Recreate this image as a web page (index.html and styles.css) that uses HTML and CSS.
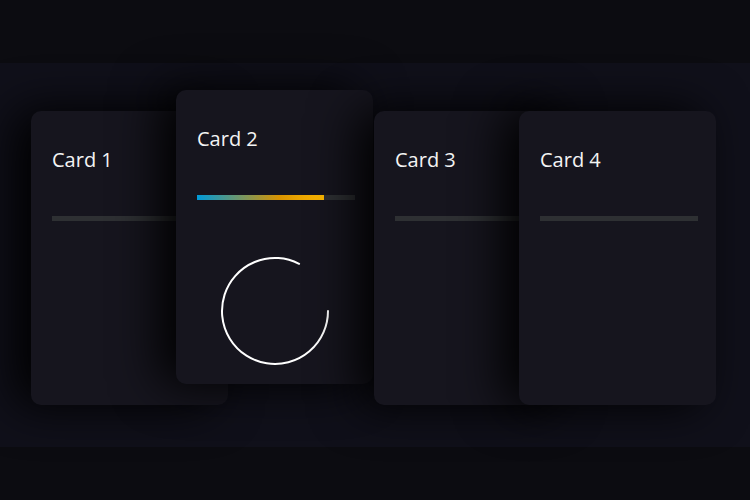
FILE: index.html
```html
<!DOCTYPE html>
<html lang="en">
<head>
<meta charset="utf-8">
<title>Cards</title>
<link rel="stylesheet" href="styles.css">
</head>
<body>
<section class="card-list">
  <article class="card">
    <h3 class="title">Card 1</h3>
    <div class="bar"><div class="filled" style="width:0"></div></div>
  </article>
  <article class="card card-raised">
    <h3 class="title">Card 2</h3>
    <div class="bar"><div class="filled" style="width:127px"></div></div>
    <svg class="circle" width="110" height="110" viewBox="0 0 110 110">
      <path d="M108 55 A53 53 0 1 1 79.1 7.8" fill="none" stroke="#ffffff" stroke-width="2" stroke-linecap="round"/>
    </svg>
  </article>
  <article class="card card-shifted">
    <h3 class="title">Card 3</h3>
    <div class="bar"><div class="filled" style="width:0"></div></div>
  </article>
  <article class="card">
    <h3 class="title">Card 4</h3>
    <div class="bar"><div class="filled" style="width:0"></div></div>
  </article>
</section>
</body>
</html>
```
FILE: styles.css
```css
html, body {
  margin: 0;
  padding: 0;
  background: #0c0c11;
  height: 100%;
}
body {
  font-family: "Open Sans", "Noto Sans", sans-serif;
}
.card-list {
  margin-top: 63px;
  height: 384px;
  box-sizing: border-box;
  padding: 48px 0 0 31px;
  background: #10101a;
  display: flex;
  align-items: flex-start;
}
.card {
  width: 197px;
  height: 294px;
  flex: none;
  box-sizing: border-box;
  padding: 35px 21px 0;
  background: #16151e;
  border-radius: 10px;
  box-shadow: -16px 0 48px #000;
  display: flex;
  flex-direction: column;
}
.card + .card {
  margin-left: -52px;
}
.card-raised {
  margin-top: -21px;
}
.card + .card-shifted {
  margin-left: 1px;
}
.title {
  margin: 0;
  font-size: 20px;
  line-height: 27px;
  font-weight: 400;
  color: #f4f4f4;
}
.bar {
  margin-top: 43px;
  width: 158px;
  height: 5px;
  background: #2e3033;
  display: flex;
}
.filled {
  height: 100%;
  background: linear-gradient(90deg, #009ad9 0%, #d99300 65%, #ffba00 100%);
}
.circle {
  margin-top: 56px;
  align-self: center;
}
```
